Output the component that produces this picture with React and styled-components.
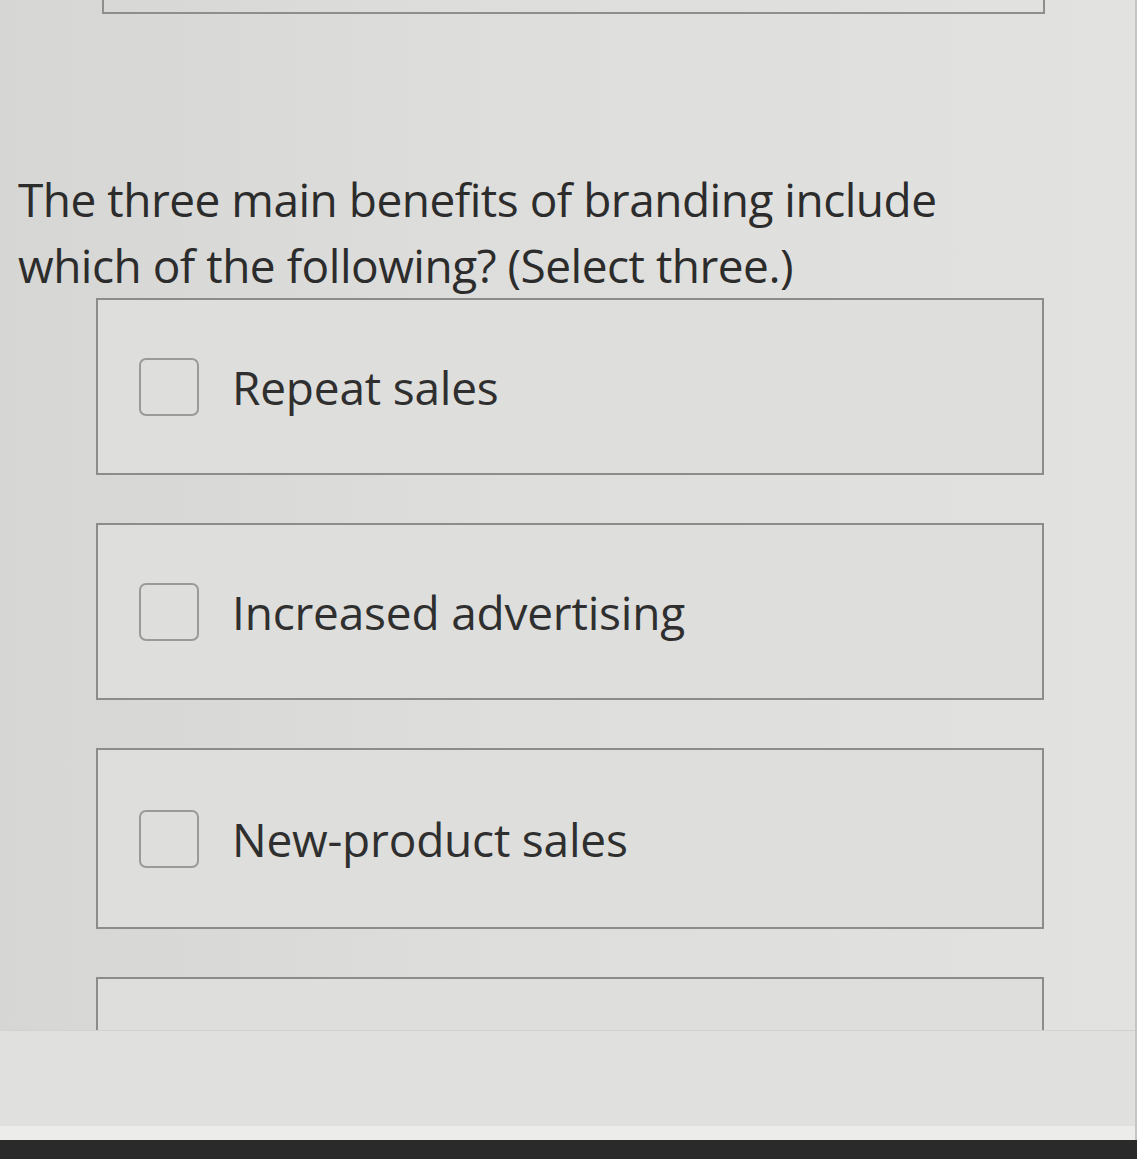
import React from "react";
import styled, { createGlobalStyle } from "styled-components";

const Global = createGlobalStyle`
  html, body {
    margin: 0;
    padding: 0;
    height: 1159px;
    overflow: hidden;
    background: #dcdcda;
  }
  body {
    font-family: "Open Sans", "Noto Sans", Arial, sans-serif;
    color: #2f2f2f;
  }
`;

const Frame = styled.div`
  width: 1137px;
  height: 1159px;
  display: flex;
  flex-direction: column;
  background: #2a2a2a;
`;

const Screen = styled.div`
  flex: 0 0 1140px;
  display: flex;
  flex-direction: column;
  background: linear-gradient(90deg, #d6d6d4 0%, #dddddb 40%, #e2e2e0 100%);
  border-right: 2px solid #c4c4c2;
  box-sizing: border-box;
`;

const Scroller = styled.div`
  flex: 0 0 1030px;
  overflow: hidden;
  display: flex;
  flex-direction: column;
`;

const PrevCard = styled.div`
  margin-left: 102px;
  width: 943px;
  height: 14px;
  border: 2px solid #8e8e8e;
  border-top: none;
  box-sizing: border-box;
  flex-shrink: 0;
`;

const Question = styled.p`
  margin: 152px 0 0 18px;
  font-size: 46px;
  line-height: 66px;
  font-weight: 400;
  letter-spacing: -0.5px;
  color: #2c2c2c;
`;

const Options = styled.div`
  display: flex;
  flex-direction: column;
  gap: 48px;
  margin-left: 96px;
  flex-shrink: 0;
`;

const Option = styled.label`
  display: flex;
  align-items: center;
  gap: 33px;
  width: 948px;
  height: ${(p) => p.$h || 178}px;
  padding-left: 41px;
  box-sizing: border-box;
  border: 2px solid #8c8c8c;
  background: #dededc;
  flex-shrink: 0;
`;

const Box = styled.span`
  width: 60px;
  height: 58px;
  border: 2px solid #9a9a9a;
  border-radius: 7px;
  box-sizing: border-box;
  flex-shrink: 0;
`;

const OptionText = styled.span`
  font-size: 46px;
  letter-spacing: -0.2px;
  color: #2f2f2f;
`;

const Footer = styled.div`
  flex: 0 0 95px;
  background: #e0e0de;
  border-top: 1px solid #d2d2d0;
`;

const Edge = styled.div`
  flex: 1;
  background: #ececea;
`;

const options = ["Repeat sales", "Increased advertising", "New-product sales", ""];

export default function App() {
  return (
    <>
      <Global />
      <Frame>
        <Screen>
          <Scroller>
            <PrevCard />
            <Question>
              The three main benefits of branding include
              <br />
              which of the following? (Select three.)
            </Question>
            <Options>
              {options.map((label, i) => (
                <Option key={i} $h={i === 2 ? 181 : 177}>
                  <Box />
                  <OptionText>{label}</OptionText>
                </Option>
              ))}
            </Options>
          </Scroller>
          <Footer />
          <Edge />
        </Screen>
      </Frame>
    </>
  );
}
